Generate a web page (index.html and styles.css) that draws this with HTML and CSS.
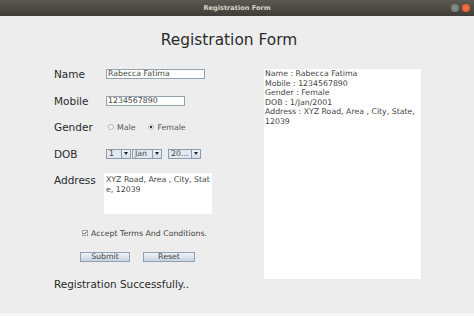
FILE: index.html
```html
<!DOCTYPE html>
<html>
  <head>
    <title>Registration Form</title>
    <link rel="stylesheet" href="styles.css">
  </head>
  <body>
    <div class="window">
      <!-- window title bar -->
      <div class="titlebar">
        <span></span>
        <span class="title">Registration Form</span>
        <span class="controls">
          <span class="dot dot-min"></span>
          <span class="dot dot-close"></span>
        </span>
      </div>

      <div class="content">
        <h1 class="heading">Registration Form</h1>

        <div class="main">
          <div class="left">
            <div class="form">
              <div class="label">Name</div>
              <div class="field name-field">Rabecca Fatima</div>

              <div class="label">Mobile</div>
              <div class="field mobile-field">1234567890</div>

              <div class="label">Gender</div>
              <div class="gender">
                <span class="radio"></span><span class="opt">Male</span>
                <span class="radio radio-on"></span><span class="opt">Female</span>
              </div>

              <div class="label">DOB</div>
              <div class="dob">
                <div class="combo combo-day"><span class="combo-text">1</span><span class="combo-arrow"></span></div>
                <div class="combo combo-month"><span class="combo-text">Jan</span><span class="combo-arrow"></span></div>
                <div class="combo combo-year"><span class="combo-text">20...</span><span class="combo-arrow"></span></div>
              </div>

              <div class="label label-top">Address</div>
              <div class="area">XYZ Road, Area , City, Stat<br>e, 12039</div>
            </div>

            <div class="terms">
              <svg class="check" width="6" height="6" viewBox="0 0 6 6">
                <rect x="0.5" y="0.5" width="5" height="5" fill="#fff" stroke="#9aa5b1"/>
                <path d="M1.5 3 L2.6 4.2 L4.6 1.6" fill="none" stroke="#333" stroke-width="0.9"/>
              </svg>
              <span>Accept Terms And Conditions.</span>
            </div>

            <div class="buttons">
              <button class="btn btn-submit">Submit</button>
              <button class="btn btn-reset">Reset</button>
            </div>

            <div class="result">Registration Successfully..</div>
          </div>

          <!-- output area -->
          <div class="output">
            Name : Rabecca Fatima<br>
            Mobile : 1234567890<br>
            Gender : Female<br>
            DOB : 1/Jan/2001<br>
            Address : XYZ Road, Area , City, State, 12039
          </div>
        </div>
      </div>
    </div>
  </body>
</html>
```

FILE: styles.css
```css
html {
  background-color: #f6f6f6;
}

body {
  margin: 0;
  font-family: 'DejaVu Sans', sans-serif;
  color: #2a2a2a;
}

.window {
  width: 474px;
  height: 313px;
  background-color: #ededed;
  display: flex;
  flex-direction: column;
}

.titlebar {
  height: 16px;
  display: grid;
  grid-template-columns: 1fr auto 1fr;
  align-items: center;
  background: linear-gradient(#5c5852, #403d38);
}

.title {
  font-size: 6.6px;
  font-weight: bold;
  color: #d8d4cb;
}

.controls {
  justify-self: end;
  display: flex;
  gap: 3px;
  padding-right: 4px;
}

.dot {
  width: 8px;
  height: 8px;
  border-radius: 50%;
}

.dot-min {
  background: radial-gradient(#8d918b, #6e716c);
}

.dot-close {
  background: radial-gradient(#f47a4a, #dc5420);
}

.content {
  padding-top: 14px;
}

.heading {
  margin: 0;
  padding-right: 16px;
  font-size: 15.4px;
  font-weight: normal;
  line-height: 20px;
  text-align: center;
  color: #2b2b2b;
}

.main {
  display: flex;
  margin-top: 17px;
  padding-left: 54px;
}

.left {
  width: 210px;
}

.form {
  display: grid;
  grid-template-columns: 52px auto;
  grid-template-rows: 14px 14px 14px 14px 41px;
  row-gap: 12.5px;
  align-items: center;
}

.label {
  font-size: 10.5px;
  line-height: 14px;
}

.label-top {
  align-self: start;
}

.field {
  box-sizing: border-box;
  height: 10px;
  border: 1px solid #95a2b0;
  background-color: #fff;
  font-size: 7.8px;
  line-height: 8px;
  padding-left: 1px;
  color: #444;
}

.name-field {
  width: 99px;
}

.mobile-field {
  width: 79px;
}

.gender {
  display: flex;
  align-items: center;
  font-size: 7.8px;
  padding-left: 2px;
}

.radio {
  box-sizing: border-box;
  width: 6px;
  height: 6px;
  border-radius: 50%;
  border: 1px solid #b0b6bd;
  background-color: #f8f8f8;
  margin-right: 3px;
}

.radio-on {
  background: radial-gradient(#333 40%, #e8e8e8 50%);
  border-color: #c0c0c0;
  margin-left: 13px;
}

.opt {
  color: #555;
}

.dob {
  display: flex;
  align-items: center;
}

.combo {
  box-sizing: border-box;
  display: flex;
  height: 10px;
  border: 1px solid #8a9cb0;
  font-size: 7.8px;
  line-height: 8px;
  color: #444;
}

.combo-day {
  width: 25px;
}

.combo-month {
  width: 30px;
  margin-left: 1px;
}

.combo-year {
  width: 33px;
  margin-left: 6px;
}

.combo-text {
  flex: 1;
  padding-left: 2px;
  background-color: #e2e8ef;
}

.combo-arrow {
  width: 8px;
  border-left: 1px solid #8a9cb0;
  background: linear-gradient(#f2f5f8, #d4dde7);
  display: flex;
  align-items: center;
  justify-content: center;
}

.combo-arrow::after {
  content: "";
  border-left: 2.5px solid transparent;
  border-right: 2.5px solid transparent;
  border-top: 3px solid #222;
}

.area {
  align-self: start;
  margin-left: -2px;
  width: 108px;
  height: 41px;
  box-sizing: border-box;
  background-color: #fff;
  padding: 2px 2px;
  font-size: 7.8px;
  line-height: 10px;
  color: #444;
}

.terms {
  display: flex;
  align-items: center;
  gap: 3px;
  height: 10px;
  margin-top: 14px;
  padding-left: 28px;
  font-size: 7.8px;
  color: #444;
}

.buttons {
  display: flex;
  margin-top: 14px;
  padding-left: 26px;
}

.btn {
  box-sizing: border-box;
  height: 10px;
  padding: 0;
  border: 1px solid #8da0b5;
  background: linear-gradient(#eef3f8, #c8d4e1);
  font-family: 'DejaVu Sans', sans-serif;
  font-size: 7.8px;
  line-height: 8px;
  color: #444;
}

.btn-submit {
  width: 50px;
}

.btn-reset {
  width: 52px;
  margin-left: 13px;
}

.result {
  margin-top: 15px;
  font-size: 10.4px;
  line-height: 14px;
}

.output {
  box-sizing: border-box;
  width: 157px;
  height: 210px;
  margin-top: 2px;
  background-color: #fff;
  padding: 0 1px;
  font-size: 7.8px;
  line-height: 9.5px;
  color: #444;
}
```
